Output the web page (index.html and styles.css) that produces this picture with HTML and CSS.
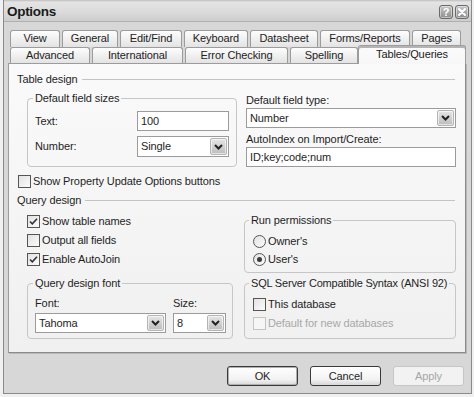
FILE: index.html
```html
<!DOCTYPE html>
<html>
<head>
<meta charset="utf-8">
<title>Options</title>
<link rel="stylesheet" href="styles.css">
</head>
<body>
<div class="window">
  <div class="titlebar">
    <span class="title">Options</span>
    <div class="caption-btns">
      <span class="cap-btn">?</span>
      <span class="cap-btn"><svg width="8" height="8" viewBox="0 0 8 8"><path d="M1 1L7 7M7 1L1 7" stroke="#fff" stroke-width="2" stroke-linecap="round"/></svg></span>
    </div>
  </div>
  <div class="client">
    <div class="tabrow back">
      <div class="tab w-view">View</div>
      <div class="tab w-general">General</div>
      <div class="tab w-edit">Edit/Find</div>
      <div class="tab w-keyboard">Keyboard</div>
      <div class="tab w-datasheet">Datasheet</div>
      <div class="tab w-forms">Forms/Reports</div>
      <div class="tab w-pages">Pages</div>
    </div>
    <div class="tabrow front">
      <div class="tab w-advanced">Advanced</div>
      <div class="tab w-intl">International</div>
      <div class="tab w-error">Error Checking</div>
      <div class="tab w-spelling">Spelling</div>
      <div class="tab selected w-tq">Tables/Queries</div>
    </div>
    <div class="panel">
      <div class="section-head"><span>Table design</span><i class="rule"></i></div>
      <div class="table-design">
        <fieldset class="group sizes">
          <legend>Default field sizes</legend>
          <div class="field-row">
            <span class="field-label">Text:</span>
            <div class="input w-small">100</div>
          </div>
          <div class="field-row">
            <span class="field-label">Number:</span>
            <div class="combo w-small tall"><span class="combo-text">Single</span><span class="dd"><svg width="9" height="6" viewBox="0 0 9 6"><path d="M1 1L4.5 4.5L8 1" fill="none" stroke="#222" stroke-width="2"/></svg></span></div>
          </div>
        </fieldset>
        <div class="right-col">
          <span class="lbl first">Default field type:</span>
          <div class="combo"><span class="combo-text">Number</span><span class="dd"><svg width="9" height="6" viewBox="0 0 9 6"><path d="M1 1L4.5 4.5L8 1" fill="none" stroke="#222" stroke-width="2"/></svg></span></div>
          <span class="lbl">AutoIndex on Import/Create:</span>
          <div class="input">ID;key;code;num</div>
        </div>
      </div>
      <div class="check-row prop">
        <span class="cb"></span><span>Show Property Update Options buttons</span>
      </div>
      <div class="section-head qd"><span>Query design</span><i class="rule"></i></div>
      <div class="query-design">
        <div class="q-left">
          <div class="checks">
            <div class="check-row"><span class="cb"><svg width="11" height="11" viewBox="0 0 11 11"><path d="M2 5.5L4.3 7.8L9 2.8" fill="none" stroke="#333" stroke-width="1.6"/></svg></span><span>Show table names</span></div>
            <div class="check-row"><span class="cb"></span><span>Output all fields</span></div>
            <div class="check-row"><span class="cb"><svg width="11" height="11" viewBox="0 0 11 11"><path d="M2 5.5L4.3 7.8L9 2.8" fill="none" stroke="#333" stroke-width="1.6"/></svg></span><span>Enable AutoJoin</span></div>
          </div>
          <fieldset class="group font-group">
            <legend>Query design font</legend>
            <div class="font-grid">
              <span>Font:</span>
              <span>Size:</span>
              <div class="combo"><span class="combo-text">Tahoma</span><span class="dd"><svg width="9" height="6" viewBox="0 0 9 6"><path d="M1 1L4.5 4.5L8 1" fill="none" stroke="#222" stroke-width="2"/></svg></span></div>
              <div class="combo"><span class="combo-text">8</span><span class="dd"><svg width="9" height="6" viewBox="0 0 9 6"><path d="M1 1L4.5 4.5L8 1" fill="none" stroke="#222" stroke-width="2"/></svg></span></div>
            </div>
          </fieldset>
        </div>
        <div class="q-right">
          <fieldset class="group rgroup perms">
            <legend>Run permissions</legend>
            <div class="radio-row"><span class="rb"></span><span>Owner's</span></div>
            <div class="radio-row"><span class="rb on"></span><span>User's</span></div>
          </fieldset>
          <fieldset class="group rgroup sql">
            <legend>SQL Server Compatible Syntax (ANSI 92)</legend>
            <div class="check-row"><span class="cb"></span><span>This database</span></div>
            <div class="check-row disabled"><span class="cb"></span><span>Default for new databases</span></div>
          </fieldset>
        </div>
      </div>
    </div>
    <div class="buttons">
      <div class="btn default">OK</div>
      <div class="btn">Cancel</div>
      <div class="btn disabled">Apply</div>
    </div>
  </div>
</div>
</body>
</html>
```

FILE: styles.css
```css
* { box-sizing: border-box; }
html, body { margin: 0; padding: 0; }
body {
  width: 474px;
  height: 397px;
  overflow: hidden;
  background: #f0f0f0;
  font-family: "Liberation Sans", Arial, sans-serif;
  font-size: 11px;
  line-height: 13px;
  letter-spacing: -0.1px;
  color: #1e1e1e;
  padding-left: 3px;
}
.window {
  width: 469px;
  height: 394px;
  background: #d7d7d7;
  border: 1px solid #8a8a8a;
  border-top: none;
  display: flex;
  flex-direction: column;
}
.titlebar {
  height: 22px;
  flex: none;
  display: flex;
  align-items: flex-start;
  justify-content: space-between;
  padding: 0 2px 0 3px;
  background: linear-gradient(#bdbdbd 0, #e4e4e4 2px, #dadada 60%, #cdcdcd);
  border-bottom: 1px solid #b0b0b0;
}
.title {
  font-weight: bold;
  font-size: 13.5px;
  letter-spacing: -0.3px;
  line-height: 15px;
  margin-top: 4px;
  color: #1a1a1a;
}
.caption-btns { display: flex; gap: 2px; margin-top: 5px; }
.cap-btn {
  width: 14px;
  height: 14px;
  border: 1px solid #6a6a6a;
  border-radius: 3px;
  background: linear-gradient(#c6c6c6, #8c8c8c);
  box-shadow: inset 0 0 0 1px rgba(255,255,255,0.45);
  display: flex;
  align-items: center;
  justify-content: center;
  color: #fff;
  font-weight: bold;
  font-size: 11px;
  line-height: 12px;
}
.client {
  flex: 1;
  padding: 8px 5px 0 4px;
  display: flex;
  flex-direction: column;
}
.tabrow { display: flex; gap: 2px; padding-left: 2px; }
.tabrow.back { height: 17px; }
.tabrow.front { height: 16px; }
.tab {
  flex: none;
  border: 1px solid #9c9c9c;
  border-bottom: none;
  border-radius: 3px 3px 0 0;
  background: linear-gradient(#fdfdfd, #e3e3e3);
  text-align: center;
  line-height: 15px;
  color: #222;
  white-space: nowrap;
}
.tab.selected {
  position: relative;
  z-index: 2;
  height: 19px;
  margin: -2px -2px 0 -2px;
  background: linear-gradient(#fbfbfb, #f7f7f7);
  box-shadow: inset 0 2px 0 #b4b4b4;
  line-height: 17px;
}
.w-view { width: 50px; }
.w-general { width: 56px; }
.w-edit { width: 62px; }
.w-keyboard { width: 64px; }
.w-datasheet { width: 68px; }
.w-forms { width: 90px; }
.w-pages { width: 49px; }
.w-advanced { width: 80px; }
.w-intl { width: 91px; }
.w-error { width: 103px; }
.w-spelling { width: 68px; }
.w-tq { width: 108px; }

.panel {
  position: relative;
  z-index: 1;
  width: 458px;
  height: 290px;
  flex: none;
  border: 1px solid #9c9c9c;
  border-right-color: #8a8a8a;
  border-bottom-color: #8a8a8a;
  box-shadow: 1px 1px 0 #b8b8b8;
  background: linear-gradient(#fafafa, #f0f0f0);
  padding: 9px 9px 0 8px;
}
.section-head {
  display: flex;
  align-items: center;
  gap: 4px;
  height: 13px;
  color: #1e1e1e;
}
.section-head .rule {
  flex: 1;
  height: 1px;
  background: #c4c4c4;
  margin-right: 1px;
}
.section-head.qd { margin-top: 6px; }

.table-design {
  display: flex;
  gap: 9px;
  margin: 6px 0 0 10px;
}
.group {
  margin: 0;
  min-width: 0;
  border: 1px solid #c6c6c6;
  border-radius: 4px;
}
.group legend {
  padding: 0 2px;
  margin-left: -2px;
  line-height: 13px;
  white-space: nowrap;
}
.sizes {
  width: 210px;
  flex: none;
  padding: 6px 7px 9px 7px;
  display: flex;
  flex-direction: column;
  gap: 5px;
}
.field-row { display: flex; align-items: center; }
.field-label { width: 102px; flex: none; }
.input {
  height: 20px;
  border: 1px solid #9b9b9b;
  background: #fff;
  padding: 0 3px;
  line-height: 18px;
  white-space: nowrap;
}
.w-small { width: 92px; flex: none; }
.combo {
  height: 20px;
  border: 1px solid #9b9b9b;
  background: #fff;
  display: flex;
  align-items: stretch;
  padding: 1px 1px 1px 3px;
}
.combo.tall { height: 21px; }
.combo-text { flex: 1; line-height: 16px; white-space: nowrap; }
.dd {
  width: 17px;
  flex: none;
  border: 1px solid #b4b4b4;
  border-radius: 2px;
  background: linear-gradient(#e6e6e6, #bcbcbc);
  box-shadow: inset 0 0 0 1px rgba(255,255,255,0.6);
  display: flex;
  align-items: center;
  justify-content: center;
}
.right-col {
  width: 210px;
  flex: none;
  display: flex;
  flex-direction: column;
}
.right-col .lbl { margin-top: 5px; margin-bottom: 1px; }
.right-col .lbl.first { margin-top: 2px; }

.check-row {
  display: flex;
  align-items: center;
  gap: 2px;
  height: 13px;
  white-space: nowrap;
}
.check-row.prop { margin: 8px 0 0 1px; }
.cb {
  width: 13px;
  height: 13px;
  flex: none;
  border: 1px solid #555;
  background: linear-gradient(135deg, #e2e2e2, #fbfbfb);
  display: flex;
  align-items: center;
  justify-content: center;
}
.check-row.disabled { color: #a8a8a8; }
.check-row.disabled .cb { border-color: #c4c4c4; background: #f6f6f6; }

.query-design {
  display: flex;
  gap: 11px;
  margin: 7px 0 0 10px;
}
.q-left { width: 206px; flex: none; }
.checks {
  margin-top: 1px;
  display: flex;
  flex-direction: column;
  gap: 6px;
}
.font-group {
  margin-top: 11px;
  padding: 7px 6px 5px 7px;
}
.font-grid {
  display: grid;
  grid-template-columns: 131px 53px;
  column-gap: 7px;
  row-gap: 3px;
}
.q-right { width: 212px; flex: none; }
.rgroup legend { margin-left: -4px; }
.sql legend { letter-spacing: -0.2px; }
.perms {
  padding: 8px 8px 6px 8px;
  display: flex;
  flex-direction: column;
  gap: 5px;
}
.sql {
  margin-top: 4px;
  padding: 8px 4px 8px 8px;
  display: flex;
  flex-direction: column;
  gap: 6px;
}
.radio-row {
  display: flex;
  align-items: center;
  gap: 2px;
  height: 13px;
}
.rb {
  width: 13px;
  height: 13px;
  flex: none;
  border: 1px solid #555;
  border-radius: 50%;
  background: linear-gradient(135deg, #e2e2e2, #fbfbfb);
  display: flex;
  align-items: center;
  justify-content: center;
}
.rb.on::after {
  content: "";
  width: 5px;
  height: 5px;
  border-radius: 50%;
  background: #3a3a3a;
}

.buttons {
  display: flex;
  justify-content: flex-end;
  gap: 12px;
  margin: 13px 2px 0 0;
}
.btn {
  width: 71px;
  height: 20px;
  border: 1px solid #3a3a3a;
  border-radius: 3px;
  background: linear-gradient(#ffffff, #f2f2f2 70%, #d8d8d8);
  text-align: center;
  line-height: 18px;
  color: #1e1e1e;
}
.btn.default { box-shadow: inset 0 0 0 1px #b0b0b0; }
.btn.disabled {
  border-color: #c6c6c6;
  background: #f2f2f2;
  color: #a6a6a6;
}
```
